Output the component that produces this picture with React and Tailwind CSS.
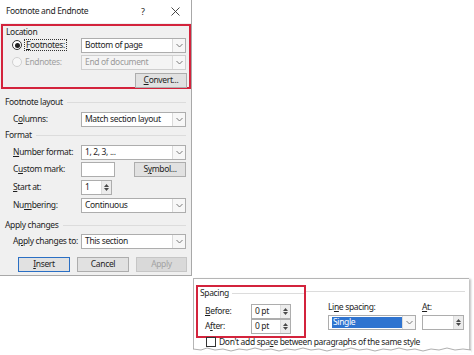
import React from "react";

const font = { fontFamily: '"Noto Sans", "Open Sans", sans-serif' };

function Chevron() {
  return (
    <svg width="7" height="5" viewBox="0 0 7 5" className="block">
      <polyline points="0.5,1 3.5,4 6.5,1" fill="none" stroke="#7a7a7a" strokeWidth="1" />
    </svg>
  );
}

function Select({ value, disabled, w = "w-[105px]", highlight }) {
  return (
    <div
      className={`${w} h-[15px] flex items-stretch border ${
        disabled ? "border-[#cfcfcf] bg-[#f4f4f4] text-[#9a9a9a]" : "border-[#adadad] bg-white text-[#1e1e1e]"
      }`}
    >
      <div className="flex-1 flex items-center pl-[3px] overflow-hidden whitespace-nowrap">
        {highlight ? (
          <span className="bg-[#2f74d0] text-white h-[11px] flex items-center px-[1px] w-full leading-none">{value}</span>
        ) : (
          <span className="leading-none">{value}</span>
        )}
      </div>
      <div className="w-[13px] flex items-center justify-center border-l border-[#dadada] bg-[#f7f7f7]">
        <Chevron />
      </div>
    </div>
  );
}

function Spinner({ value, w = "w-[31px]" }) {
  return (
    <div className={`${w} h-[15px] flex items-stretch border border-[#adadad] bg-white`}>
      <div className="flex-1 flex items-center pl-[3px] leading-none text-[#1e1e1e] whitespace-nowrap">{value}</div>
      <div className="w-[10px] flex flex-col items-center justify-center gap-[1px] bg-[#ececec] border-l border-[#dcdcdc]">
        <svg width="5" height="3" viewBox="0 0 5 3"><polygon points="0,3 2.5,0 5,3" fill="#4a4a4a" /></svg>
        <svg width="5" height="3" viewBox="0 0 5 3"><polygon points="0,0 2.5,3 5,0" fill="#4a4a4a" /></svg>
      </div>
    </div>
  );
}

function Button({ children, def, disabled, w = "w-[52px]" }) {
  return (
    <div
      className={`${w} h-[15px] flex items-center justify-center leading-none whitespace-nowrap border ${
        def
          ? "border-[#2a6fc4] bg-[#e1e1e1] text-[#1e1e1e]"
          : disabled
          ? "border-[#c6c6c6] bg-[#d9d9d9] text-[#a3a3a3]"
          : "border-[#adadad] bg-[#e1e1e1] text-[#1e1e1e]"
      }`}
    >
      {children}
    </div>
  );
}

function Header({ children }) {
  return (
    <div className="flex items-center h-[12px] pl-[5px] pr-[5px] gap-[4px]">
      <span className="leading-none text-[#1e1e1e] whitespace-nowrap">{children}</span>
      <div className="flex-1 h-px bg-[#dcdcdc]" />
    </div>
  );
}

function Row({ label, children, mt = "mt-[3px]" }) {
  return (
    <div className={`flex items-center h-[15px] ${mt}`}>
      <div className="w-[81px] shrink-0 pl-[13px] leading-none text-[#1e1e1e] whitespace-nowrap">{label}</div>
      {children}
    </div>
  );
}

const U = ({ children }) => <span className="underline underline-offset-[1px]">{children}</span>;

export default function App() {
  return (
    <div className="w-[474px] h-[355px] bg-white relative overflow-hidden text-[8.5px] tracking-[-0.35px]" style={font}>
      {/* Footnote and Endnote dialog */}
      <div className="w-[192px] h-[276px] bg-[#f0f0f0] border-r border-b border-[#a8a8a8] flex flex-col">
        <div className="h-[23px] bg-white flex items-center pl-[6px] shrink-0 text-[8.5px] text-[#1e1e1e] whitespace-nowrap">
          <span className="leading-none w-[135px]">Footnote and Endnote</span>
          <span className="leading-none text-[9px]">?</span>
          <svg className="ml-[26px]" width="9" height="9" viewBox="0 0 9 9">
            <path d="M0.5,0.5 L8.5,8.5 M8.5,0.5 L0.5,8.5" stroke="#333" strokeWidth="0.9" />
          </svg>
        </div>

        {/* Location (highlighted) */}
        <div className="ml-[1px] mt-[1px] w-[190px] h-[65px] border-2 border-[#d3233c] flex flex-col">
          <div className="pl-[3px] pt-[2px] h-[13px] leading-none text-[#1e1e1e]">Location</div>
          <div className="flex items-center h-[15px] mt-[1px]">
            <div className="w-[78px] pl-[9px] flex items-center gap-[2px]">
              <div className="w-[10px] h-[10px] rounded-full border border-[#333] bg-white flex items-center justify-center">
                <div className="w-[5px] h-[5px] rounded-full bg-[#1e1e1e]" />
              </div>
              <span className="leading-none text-[#1e1e1e] border border-dotted border-[#333] px-[1px] py-[1px] whitespace-nowrap">
                <U>F</U>ootnotes:
              </span>
            </div>
            <Select value="Bottom of page" />
          </div>
          <div className="flex items-center h-[15px] mt-[2px]">
            <div className="w-[78px] pl-[9px] flex items-center gap-[3px]">
              <div className="w-[10px] h-[10px] rounded-full border border-[#d0d0d0] bg-[#f7f7f7]" />
              <span className="leading-none text-[#a0a0a0]">Endnotes:</span>
            </div>
            <Select value="End of document" disabled />
          </div>
          <div className="flex justify-end pr-[2px] mt-[3px]">
            <Button>
              <U>C</U>onvert...
            </Button>
          </div>
        </div>

        <div className="mt-[7px]">
          <Header>Footnote layout</Header>
        </div>
        <Row label={<>C<U>o</U>lumns:</>} mt="mt-[4px]">
          <Select value="Match section layout" />
        </Row>

        <div className="mt-[2px]">
          <Header>Format</Header>
        </div>
        <Row label={<><U>N</U>umber format:</>} mt="mt-[4px]">
          <Select value="1, 2, 3, ..." />
        </Row>
        <Row label={<>C<U>u</U>stom mark:</>} mt="mt-[2px]">
          <div className="w-[34px] h-[15px] border border-[#adadad] bg-white" />
          <div className="ml-[19px]">
            <Button>
              S<U>y</U>mbol...
            </Button>
          </div>
        </Row>
        <Row label={<><U>S</U>tart at:</>}>
          <Spinner value="1" />
        </Row>
        <Row label={<>Nu<U>m</U>bering:</>}>
          <Select value="Continuous" />
        </Row>

        <div className="mt-[6px]">
          <Header>Apply changes</Header>
        </div>
        <Row label={<>A<U>p</U>ply changes to:</>} mt="mt-[3px]">
          <Select value="This section" />
        </Row>

        <div className="flex items-center mt-[8px] pl-[18px] gap-[7px]">
          <Button def>
            <U>I</U>nsert
          </Button>
          <Button>Cancel</Button>
          <Button disabled w="w-[51px]">Apply</Button>
        </div>
      </div>

      {/* Paragraph spacing snippet */}
      <div className="ml-[193px] mt-[2px] w-[278px] h-[75px] relative">
        <div className="w-[276px] h-[73px] bg-white border-l border-t border-[#b5b5b5] shadow-[2px_1px_2px_rgba(0,0,0,0.25)] flex flex-col">
          <div className="flex items-start mt-[6px]">
            <div className="ml-[2px] w-[110px] h-[53px] border-2 border-[#d3233c] flex flex-col">
              <div className="flex items-center h-[12px] pl-[2px] gap-[3px]">
                <span className="leading-none text-[#1e1e1e]">Spacing</span>
                <div className="flex-1 h-px bg-[#dcdcdc]" />
              </div>
              <div className="flex items-center h-[15px] mt-[5px]">
                <div className="w-[53px] pl-[7px] leading-none text-[#1e1e1e]">
                  <U>B</U>efore:
                </div>
                <Spinner value="0 pt" w="w-[40px]" />
              </div>
              <div className="flex items-center h-[15px] mt-[0px]">
                <div className="w-[53px] pl-[7px] leading-none text-[#1e1e1e]">
                  A<U>f</U>ter:
                </div>
                <Spinner value="0 pt" w="w-[40px]" />
              </div>
            </div>
            <div className="flex-1 flex flex-col">
              <div className="h-[12px] flex items-center">
                <div className="w-full h-px bg-[#dcdcdc] mr-[4px]" />
              </div>
              <div className="flex mt-[3px]">
                <div className="ml-[22px] flex flex-col">
                  <div className="h-[15px] flex items-center leading-none text-[#1e1e1e] whitespace-nowrap">
                    Li<U>n</U>e spacing:
                  </div>
                  <Select value="Single" w="w-[88px]" highlight />
                </div>
                <div className="ml-[6px] flex flex-col">
                  <div className="h-[15px] flex items-center leading-none text-[#1e1e1e]">
                    <U>A</U>t:
                  </div>
                  <Spinner value="" w="w-[42px]" />
                </div>
              </div>
            </div>
          </div>
          <div className="flex items-center ml-[12px] mt-[-1px] gap-[3px]">
            <div className="w-[10px] h-[10px] border border-[#333] bg-white" />
            <span className="leading-none text-[#1e1e1e] whitespace-nowrap">
              Don't add spa<U>c</U>e between paragraphs of the same style
            </span>
          </div>
        </div>
        <svg className="absolute left-0 bottom-0" width="278" height="7" viewBox="0 0 278 7">
          <path
            d="M0,3 L8,4 L14,2 L22,4 L30,3 L38,5 L46,3 L54,4 L62,2 L70,4 L78,3 L86,5 L94,3 L102,4 L110,2 L118,4 L126,3 L134,5 L142,3 L150,4 L158,2 L166,4 L174,3 L182,5 L190,3 L198,4 L206,2 L214,4 L222,3 L230,5 L238,3 L246,4 L254,2 L262,4 L270,3 L278,4 L278,7 L0,7 Z"
            fill="#ffffff"
          />
          <path
            d="M0,3 L8,4 L14,2 L22,4 L30,3 L38,5 L46,3 L54,4 L62,2 L70,4 L78,3 L86,5 L94,3 L102,4 L110,2 L118,4 L126,3 L134,5 L142,3 L150,4 L158,2 L166,4 L174,3 L182,5 L190,3 L198,4 L206,2 L214,4 L222,3 L230,5 L238,3 L246,4 L254,2 L262,4 L270,3 L278,4"
            fill="none"
            stroke="#9a9a9a"
            strokeWidth="0.8"
          />
        </svg>
      </div>
    </div>
  );
}
